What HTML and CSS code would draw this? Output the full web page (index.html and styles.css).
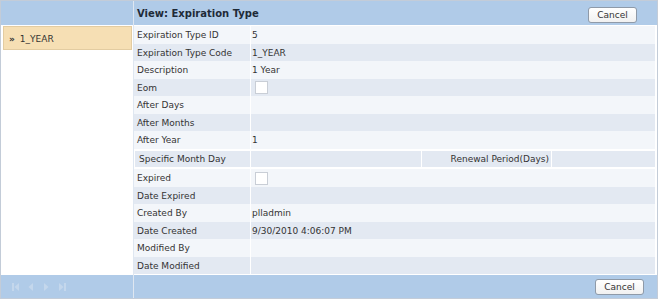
FILE: index.html
```html
<!DOCTYPE html>
<html>
<head>
<meta charset="utf-8">
<link rel="stylesheet" href="styles.css">
</head>
<body>
<div class="frame">
  <div class="hd-left"></div>
  <div class="hd-right">
    <span class="title">View: Expiration Type</span>
    <button class="btn btn-top">Cancel</button>
  </div>

  <div class="list">
    <div class="item"><span class="raquo">»</span>1_YEAR</div>
  </div>

  <div class="detail">
    <div class="row light"><div class="lbl">Expiration Type ID</div><div class="val">5</div></div>
    <div class="row dark"><div class="lbl">Expiration Type Code</div><div class="val">1_YEAR</div></div>
    <div class="row light"><div class="lbl">Description</div><div class="val">1 Year</div></div>
    <div class="row dark"><div class="lbl">Eom</div><div class="val"><span class="chk"></span></div></div>
    <div class="row light"><div class="lbl">After Days</div><div class="val"></div></div>
    <div class="row dark"><div class="lbl">After Months</div><div class="val"></div></div>
    <div class="row light"><div class="lbl">After Year</div><div class="val">1</div></div>
    <div class="subrow">
      <div class="cell cell-lbl">Specific Month Day</div>
      <div class="cell"></div>
      <div class="cell cell-right">Renewal Period(Days)</div>
      <div class="cell"></div>
    </div>
    <div class="row light"><div class="lbl">Expired</div><div class="val"><span class="chk"></span></div></div>
    <div class="row dark"><div class="lbl">Date Expired</div><div class="val"></div></div>
    <div class="row light"><div class="lbl">Created By</div><div class="val">plladmin</div></div>
    <div class="row dark"><div class="lbl">Date Created</div><div class="val">9/30/2010 4:06:07 PM</div></div>
    <div class="row light"><div class="lbl">Modified By</div><div class="val"></div></div>
    <div class="row dark"><div class="lbl">Date Modified</div><div class="val"></div></div>
  </div>

  <div class="ft-left">
    <svg class="nav" width="60" height="10" viewBox="0 0 60 10">
      <g fill="#c4d7ec">
        <rect x="1" y="1" width="2" height="8"/>
        <polygon points="8,1 8,9 3.5,5"/>
        <polygon points="22,1 22,9 17.5,5"/>
        <polygon points="33,1 33,9 37.5,5"/>
        <polygon points="48,1 48,9 52.5,5"/>
        <rect x="53" y="1" width="2" height="8"/>
      </g>
    </svg>
  </div>
  <div class="ft-right">
    <button class="btn btn-bottom">Cancel</button>
  </div>
</div>
</body>
</html>
```

FILE: styles.css
```css
* { box-sizing: border-box; }
html, body { margin: 0; padding: 0; background: #ffffff; }
body {
  font-family: "DejaVu Sans", Verdana, sans-serif;
  font-size: 9px;
  color: #333333;
}
.frame {
  width: 658px;
  height: 299px;
  border: 1px solid #c3ccd8;
  display: grid;
  grid-template-columns: 133px 1fr;
  grid-template-rows: 24px 250px 23px;
  background: #ffffff;
}
.hd-left {
  background: #b0cbe8;
  border-right: 1px solid #dfe7f1;
}
.hd-right {
  background: #b0cbe8;
  display: flex;
  align-items: center;
  justify-content: space-between;
  padding: 0 20px 0 3px;
}
.title {
  font-weight: bold;
  font-size: 10px;
  color: #1e2a38;
}
.btn {
  font-family: "DejaVu Sans", Verdana, sans-serif;
  font-size: 9px;
  color: #333333;
  background: linear-gradient(#ffffff, #f1f1f1);
  border: 1px solid #8f9aa8;
  border-radius: 3px;
  height: 16px;
  width: 49px;
  padding: 0;
  line-height: 14px;
}
.btn-top { margin-top: 4px; }
.list {
  border-right: 1px solid #dfe7f1;
  padding: 1px 1px 0 2px;
}
.item {
  height: 24px;
  background: #f6dfb4;
  border: 1px solid #e3cca1;
  display: flex;
  align-items: center;
  padding-left: 5px;
  padding-top: 1px;
  color: #333333;
}
.raquo { font-weight: bold; margin-right: 5px; }
.detail {
  padding-top: 1px;
  padding-right: 2px;
  display: flex;
  flex-direction: column;
}
.row {
  height: 17.5px;
  display: flex;
  align-items: center;
}
.row.light { background: #f3f6fa; }
.row.dark { background: #e3e9f2; }
.lbl {
  width: 116px;
  padding-left: 3px;
  padding-top: 1px;
  height: 100%;
  display: flex;
  align-items: center;
  white-space: nowrap;
}
.val {
  flex: 1;
  height: 100%;
  border-left: 1px solid #ffffff;
  padding-left: 1px;
  padding-top: 1px;
  display: flex;
  align-items: center;
}
.chk {
  width: 13px;
  height: 13px;
  background: #ffffff;
  border: 1px solid #c9ced6;
  margin-left: 3px;
}
.subrow {
  height: 20.5px;
  padding: 2px 0 2.5px 1px;
  display: grid;
  grid-template-columns: 115px 170px 129px 1fr;
  column-gap: 1px;
  background: #ffffff;
}
.cell {
  background: #e3e9f2;
  display: flex;
  align-items: center;
  padding-top: 1px;
}
.cell-lbl { padding-left: 4px; }
.cell-right { justify-content: flex-end; padding-right: 2px; }
.ft-left {
  background: #b0cbe8;
  border-right: 1px solid #dfe7f1;
  display: flex;
  align-items: center;
  padding-left: 10px;
}
.nav { display: block; margin-top: 1px; }
.ft-right {
  background: #b0cbe8;
  display: flex;
  align-items: center;
  justify-content: flex-end;
  padding-right: 13px;
}
```
